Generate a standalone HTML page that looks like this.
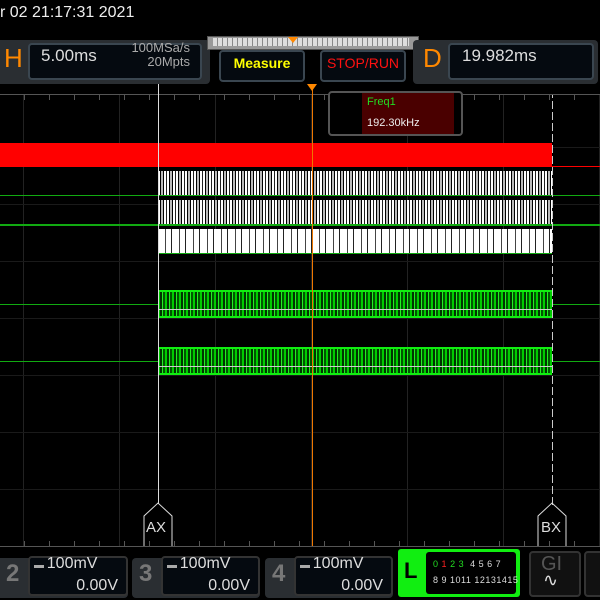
<!DOCTYPE html><html><head><style>
body{margin:0;width:600px;height:600px;background:#000;overflow:hidden;position:relative;font-family:"Liberation Sans",sans-serif;color:#ddd}
.a{position:absolute}
.box{position:absolute;background:#050a10;border:2px solid #3a4650;border-radius:4px}
.stripW{background:repeating-linear-gradient(90deg,#fff 0 2px,#000 2px 3px,#bbb 3px 5px,#000 5px 6px,#fff 6px 8px,#222 8px 9px);}
.stripG{background:repeating-linear-gradient(90deg,#0c0 0 2px,#030 2px 4px,#2e2 4px 5px,#050 5px 7px);border-top:2px solid #1e1;border-bottom:2px solid #1e1;box-sizing:border-box}
.gl{position:absolute;height:1px;background:#1a1;}
.p{position:absolute;background:#2a2e32;border-radius:4px}
</style></head><body>
<div class="a" style="left:0;top:4px;font-size:16px;color:#eee">r 02 21:17:31 2021</div>
<div class="p" style="left:-6px;top:40px;width:216px;height:44px"></div>
<div class="a" style="left:4px;top:43px;font-size:26px;color:#f80">H</div>
<div class="box" style="left:28px;top:43px;width:170px;height:33px"></div>
<div class="a" style="left:41px;top:46px;font-size:17px">5.00ms</div>
<div class="a" style="left:118px;top:41px;font-size:13px;color:#aaa;text-align:right;width:72px;line-height:14px">100MSa/s<br>20Mpts</div>
<div class="a" style="left:207px;top:36px;width:210px;height:12px;background:#999;border:1px solid #555"></div>
<div class="a" style="left:213px;top:38px;width:196px;height:8px;background:repeating-linear-gradient(90deg,#ddd 0 4px,#888 4px 5px)"></div>
<div class="a" style="left:288px;top:37px;width:0;height:0;border-left:5px solid transparent;border-right:5px solid transparent;border-top:6px solid #f80"></div>
<div class="box" style="left:219px;top:50px;width:82px;height:28px"></div>
<div class="a" style="left:219px;top:55px;width:86px;text-align:center;font-size:14px;font-weight:bold;color:#ff0">Measure</div>
<div class="box" style="left:320px;top:50px;width:82px;height:28px"></div>
<div class="a" style="left:320px;top:55px;width:86px;text-align:center;font-size:14px;color:#f11">STOP/RUN</div>
<div class="p" style="left:413px;top:40px;width:185px;height:44px"></div>
<div class="a" style="left:423px;top:43px;font-size:26px;color:#f80">D</div>
<div class="box" style="left:448px;top:43px;width:142px;height:33px"></div>
<div class="a" style="left:462px;top:46px;font-size:17px">19.982ms</div>
<div class="a" style="left:0;top:94px;width:600px;height:1px;background:#555"></div>
<div class="a" style="left:0;top:546px;width:600px;height:1px;background:#555"></div>
<div class="a" style="left:0;top:95px;width:600px;height:5px;background:repeating-linear-gradient(90deg,transparent 0 24px,#555 24px 25px)"></div>
<div class="a" style="left:0;top:541px;width:600px;height:5px;background:repeating-linear-gradient(90deg,transparent 0 24px,#555 24px 25px)"></div>
<div class="a" style="left:0;top:95px;width:600px;height:451px;background:repeating-linear-gradient(90deg,transparent 0 23px,#222 23px 24px,transparent 24px 96px)"></div>
<div class="a" style="left:0;top:95px;width:600px;height:451px;background:repeating-linear-gradient(0deg,transparent 0 56px,#1a1a1a 56px 57px)"></div>
<div class="a" style="left:0;top:143px;width:552px;height:24px;background:#f00"></div>
<div class="a" style="left:552px;top:166px;width:48px;height:1px;background:#f00"></div>
<div class="a stripW" style="left:158px;top:171px;width:394px;height:24px"></div>
<div class="a stripW" style="left:158px;top:200px;width:394px;height:24px"></div>
<div class="a" style="left:158px;top:229px;width:394px;height:24px;background:repeating-linear-gradient(90deg,#fff 0 7px,#444 7px 8px,#fff 8px 13px,#222 13px 14px)"></div>
<div class="gl" style="left:0;top:195px;width:600px"></div>
<div class="gl" style="left:0;top:224px;width:600px;height:2px"></div>
<div class="gl" style="left:158px;top:253px;width:394px"></div>
<div class="gl" style="left:0;top:304px;width:600px"></div>
<div class="gl" style="left:0;top:361px;width:600px"></div>
<div class="a stripG" style="left:158px;top:290px;width:394px;height:28px"></div>
<div class="a stripG" style="left:158px;top:347px;width:394px;height:28px"></div>
<div class="a" style="left:158px;top:309px;width:394px;height:1px;background:#ccc"></div>
<div class="a" style="left:158px;top:366px;width:394px;height:1px;background:#ccc"></div>
<div class="a" style="left:158px;top:84px;width:1px;height:420px;background:#ddd"></div>
<div class="a" style="left:552px;top:95px;width:1px;height:410px;background:repeating-linear-gradient(0deg,#ccc 0 8px,transparent 8px 11px)"></div>
<div class="a" style="left:312px;top:86px;width:1px;height:460px;background:#e70"></div>
<div class="a" style="left:307px;top:84px;width:0;height:0;border-left:5px solid transparent;border-right:5px solid transparent;border-top:7px solid #f80"></div>
<svg class="a" style="left:0;top:0" width="600" height="600"><path d="M144 546V516L158 503L172 516V546M538 546V516L552 503L566 516V546" fill="none" stroke="#ddd" stroke-width="1"/></svg>
<div class="a" style="left:146px;top:519px;font-size:15px">AX</div>
<div class="a" style="left:541px;top:519px;font-size:15px">BX</div>
<div class="box" style="left:328px;top:91px;width:131px;height:41px;background:#000;border-color:#555"></div>
<div class="a" style="left:362px;top:93px;width:92px;height:41px;background:#4a0000"></div>
<div class="a" style="left:367px;top:96px;font-size:11px;color:#2d2">Freq1</div>
<div class="a" style="left:367px;top:117px;font-size:11px;color:#eee">192.30kHz</div>
<div class="p" style="left:-4px;top:558px;width:132px;height:40px"></div>
<div class="a" style="left:6px;top:560px;font-size:24px;font-weight:bold;color:#777">2</div>
<div class="box" style="left:28px;top:556px;width:96px;height:36px;border-color:#333"></div>
<div class="a" style="left:34px;top:554px;font-size:16px;line-height:20px;width:84px"><span style="font-size:10px;color:#aaa">▬ </span>100mV<div style="text-align:right">0.00V</div></div>
<div class="p" style="left:132px;top:558px;width:128px;height:40px"></div>
<div class="a" style="left:139px;top:560px;font-size:24px;font-weight:bold;color:#777">3</div>
<div class="box" style="left:161px;top:556px;width:95px;height:36px;border-color:#333"></div>
<div class="a" style="left:167px;top:554px;font-size:16px;line-height:20px;width:83px"><span style="font-size:10px;color:#aaa">▬ </span>100mV<div style="text-align:right">0.00V</div></div>
<div class="p" style="left:265px;top:558px;width:128px;height:40px"></div>
<div class="a" style="left:272px;top:560px;font-size:24px;font-weight:bold;color:#777">4</div>
<div class="box" style="left:294px;top:556px;width:95px;height:36px;border-color:#333"></div>
<div class="a" style="left:300px;top:554px;font-size:16px;line-height:20px;width:83px"><span style="font-size:10px;color:#aaa">▬ </span>100mV<div style="text-align:right">0.00V</div></div>
<div class="a" style="left:398px;top:549px;width:122px;height:48px;background:#1e1;border-radius:3px"></div>
<div class="a" style="left:426px;top:552px;width:90px;height:42px;background:#000;border-radius:3px"></div>
<div class="a" style="left:404px;top:558px;font-size:22px;font-weight:bold;color:#000">L</div>
<div class="a" style="left:433px;top:556px;font-size:9px;line-height:16px;color:#ddd;letter-spacing:0.5px;white-space:nowrap"><span style="color:#2d2">0</span> <span style="color:#f22">1</span> <span style="color:#2d2">2 3</span>&nbsp; 4 5 6 7<br>8 9 1011 12131415</div>
<div class="box" style="left:529px;top:551px;width:48px;height:42px;background:#111;border-color:#333"></div>
<div class="a" style="left:541px;top:553px;font-size:20px;color:#555">GI</div>
<div class="a" style="left:543px;top:570px;font-size:18px;color:#ddd">∿</div>
<div class="box" style="left:584px;top:551px;width:30px;height:42px;background:#111;border-color:#333"></div>
</body></html>
